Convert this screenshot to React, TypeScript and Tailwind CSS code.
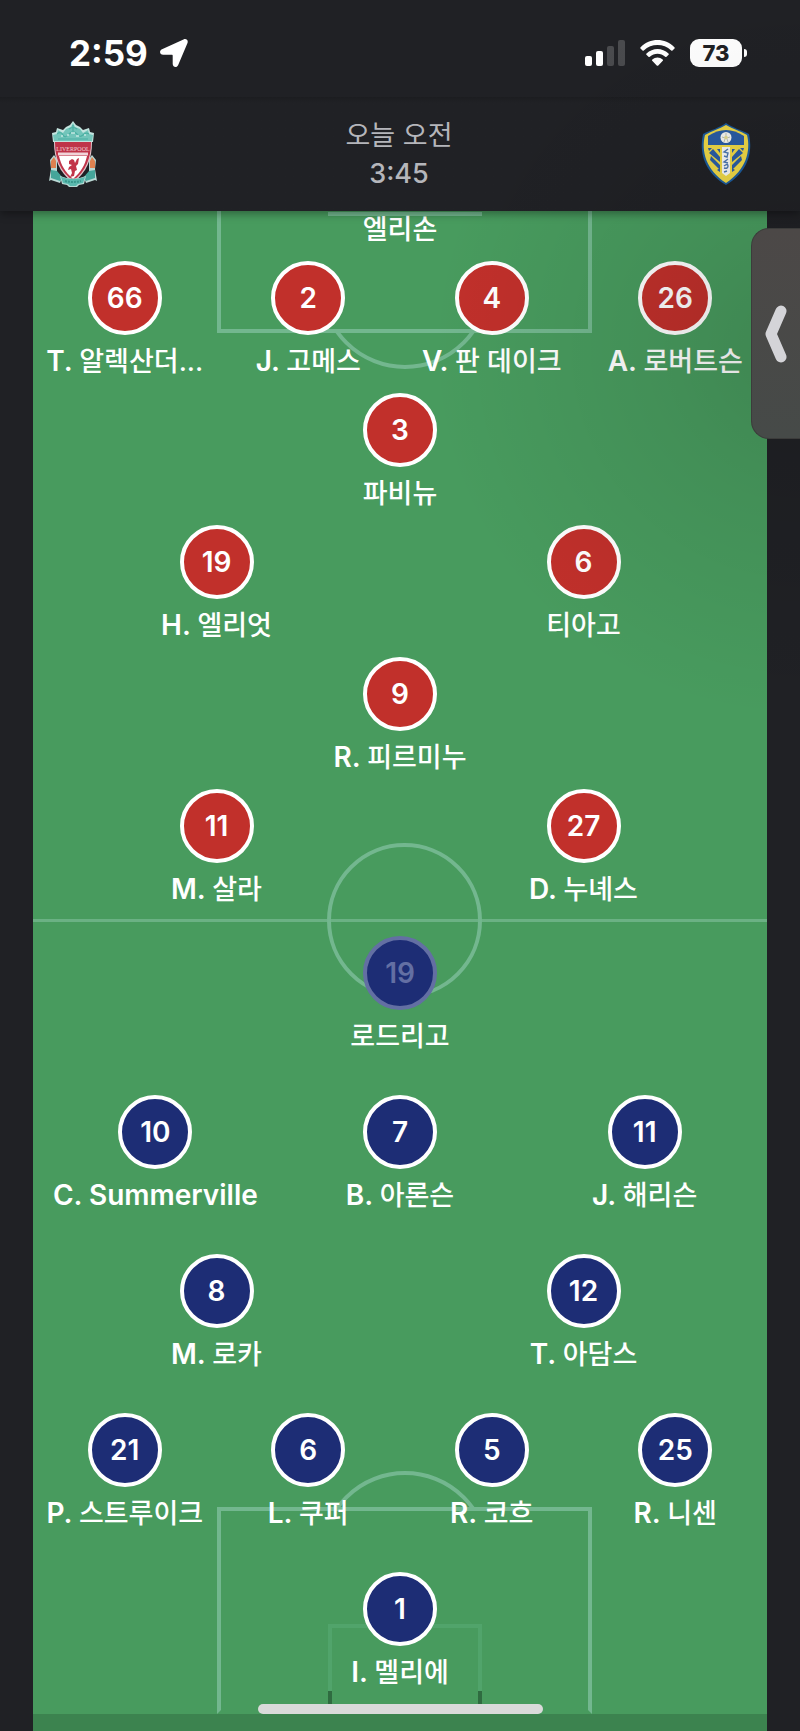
type Player = { number?: number; initial?: string; name: string; latin?: boolean; dim?: boolean };

const home: Player[][] = [
  [
    { number: 66, initial: 'T.', name: '알렉산더...' },
    { number: 2, initial: 'J.', name: '고메스' },
    { number: 4, initial: 'V.', name: '판 데이크' },
    { number: 26, initial: 'A.', name: '로버트슨' },
  ],
  [{ number: 3, name: '파비뉴' }],
  [
    { number: 19, initial: 'H.', name: '엘리엇' },
    { number: 6, name: '티아고' },
  ],
  [{ number: 9, initial: 'R.', name: '피르미누' }],
  [
    { number: 11, initial: 'M.', name: '살라' },
    { number: 27, initial: 'D.', name: '누녜스' },
  ],
];

const away: Player[][] = [
  [{ number: 19, name: '로드리고', dim: true }],
  [
    { number: 10, initial: 'C.', name: 'Summerville', latin: true },
    { number: 7, initial: 'B.', name: '아론슨' },
    { number: 11, initial: 'J.', name: '해리슨' },
  ],
  [
    { number: 8, initial: 'M.', name: '로카' },
    { number: 12, initial: 'T.', name: '아담스' },
  ],
  [
    { number: 21, initial: 'P.', name: '스트루이크' },
    { number: 6, initial: 'L.', name: '쿠퍼' },
    { number: 5, initial: 'R.', name: '코흐' },
    { number: 25, initial: 'R.', name: '니센' },
  ],
  [{ number: 1, initial: 'I.', name: '멜리에' }],
];

function PlayerName({ player }: { player: Player }) {
  return (
    <span className="block h-[38px] text-center text-[28px] leading-9 font-semibold whitespace-nowrap text-white">
      {player.initial ? player.initial + ' ' : ''}
      <span className={player.latin ? 'text-[28px]' : 'text-[27px] font-medium'}>{player.name}</span>
    </span>
  );
}

function Row({ players, team }: { players: Player[]; team: 'home' | 'away' }) {
  return (
    <ul className="flex">
      {players.map((p) => (
        <li key={p.name} className="flex min-w-0 flex-1 basis-0 flex-col items-center gap-2">
          <span
            className={
              'flex size-[74px] items-center justify-center rounded-full border-4 text-[28px] font-semibold ' +
              (team === 'home' ? 'bg-[#c1302b] ' : 'bg-[#1d2d75] ') +
              (p.dim ? 'border-[#636fa3] text-[#636fa3]' : 'border-white text-white')
            }
          >
            {p.number}
          </span>
          <PlayerName player={p} />
        </li>
      ))}
    </ul>
  );
}

function LiverpoolCrest() {
  return (
    <svg viewBox="0 0 48 66" className="h-[66px] w-12" role="img" aria-label="Liverpool">
      <path d="M24 0l3 4 4 2 3 3 6-2 1 4 4 1-1 9H4L3 12l4-1 1-4 6 2 3-3 4-2z" fill="#c3e4df" />
      <path d="M24 2l2 4 5 2 3 4 5-3 1 4 4 1-1 6H5l-1-6 4-1 1-4 5 3 3-4 5-2z" fill="#72c5ba" />
      <path d="M8 13q4-3 6 1t6-1q4-4 8 0 3 4 6 1t6-1M9 18h30M20 8q4-3 8 0M24 4v6" stroke="#4bb0a3" strokeWidth="1.2" fill="none" />
      <path d="M12 15h2m4-1h2m7 1h3m5-1h2M22 12h4" stroke="#c4e8e2" strokeWidth="1.5" />
      <path d="M1 39l4-5 3 4v14l5 5-2 5-9-3-2 1 2-12zM47 39l-4-5-3 4v14l-5 5 2 5 9-3 2 1-2-12z" fill="#b9d8d4" />
      <path d="M2 40l3-4 2 4v7H2zM46 40l-3-4-2 4v7h5z" fill="#de8150" />
      <path d="M2 49l6 1 6 7-3 3-9-3zM46 49l-6 1-6 7 3 3 9-3z" fill="#45a59a" />
      <path d="M5 21h38c0 17-5 30-19 41C10 51 5 38 5 21z" fill="#e3c5cb" />
      <path d="M6 21h36c0 16-5 29-18 39C11 50 6 37 6 21z" fill="#bf3449" />
      <path d="M10 35h28c-2 9-6 16-14 23-8-7-12-14-14-23z" fill="#fff" />
      <path d="M9 33h30" stroke="#f0d3d8" strokeWidth="3" />
      <text x="24" y="30" textAnchor="middle" fontFamily="Liberation Serif, serif" fontSize="6" fill="#f0cfd4">LIVERPOOL</text>
      <path d="M20 40l3-2 2 1 1 3 2-4 2-1-1 6-2 2 1 4-2 1-1 5-4 1 2-4-1-4-3 1 1-3 3-2-3-1z" fill="#c23449" />
      <path d="M11 55q13 5 26 0l-2 8-5 1-2 2h-8l-2-2-5-1z" fill="#b9d8d4" />
      <path d="M12 56q12 4 24 0l-2 6-5 1-2 2h-6l-2-2-5-1z" fill="#5bb9ae" />
      <path d="M16 60q8 2 16 0" stroke="#3a988d" strokeWidth="2" strokeDasharray="2 1" fill="none" />
    </svg>
  );
}

function LeedsCrest() {
  return (
    <svg viewBox="0 0 50 62" className="h-[62px] w-[50px]" role="img" aria-label="Leeds United">
      <path d="M25 0C32 5 40 7 48 11c4 18-1 38-23 51C3 49-2 29 2 11 10 7 18 5 25 0z" fill="#1c5b9b" />
      <path d="M25 2c7 4 14 6 21 10 4 16-1 35-21 48C5 47 0 28 4 12 11 8 18 6 25 2z" fill="#ecd646" />
      <path d="M7 22v-9Q25 1 43 13v9z" fill="#2a5ca3" />
      <path d="M7 25h4l-3 3zM8 30l4-4 7 8v5zM9 37l1-4 9 9v5zM16 26h3v4zM43 25h-4l3 3zM42 30l-4-4-7 8v5zM41 37l-1-4-9 9v5zM34 26h-3v4zM16 47l3-2v4zM34 47l-3-2v4z" fill="#2a5ca3" />
      <path d="M21 24h8v26l-4 3-4-3z" fill="#f3f5f4" />
      <path d="M27 26l-4 3 4 1-1 4-3-1m4 3l-4 3 4 1m-4 3q4-3 4 0t-4 2m3 3l-3 1" stroke="#4c76b0" strokeWidth="1.4" fill="none" />
      <circle cx="25" cy="14.5" r="5.5" fill="#f4f4ed" />
      <path d="M25 10v3m-4 1l3 1m5-1l-3 1m-3 4l1-3m3 3l-1-3" stroke="#b9beb6" strokeWidth="1" />
      <circle cx="25" cy="14.5" r="1.8" fill="#dfd893" />
    </svg>
  );
}

function StatusBar() {
  return (
    <div className="flex h-[97px] items-center justify-between pt-[9px] pr-[53px] pl-[69px] text-white">
      <div className="flex items-center gap-3">
        <time className="text-[35px] leading-10 font-bold">2:59</time>
        <svg viewBox="0 0 28 28" className="size-7" fill="#fff" aria-hidden="true">
          <path d="M23.500.4c2.700-1.200 5 .9 4 3.500l-9.300 22c-1.100 2.900-5.300 2.700-5.500-.9V16.800c0-.7-.3-1-1-1H3.200C-.5 15.600-1 11.500 2 10.200z" />
        </svg>
      </div>
      <div className="flex items-center gap-[15px]">
        <svg viewBox="0 0 40 26" className="h-[26px] w-10" fill="#fff" aria-label="signal">
          <rect x="0" y="16" width="7" height="10" rx="2" />
          <rect x="11" y="11" width="7" height="15" rx="2" />
          <rect x="22" y="6" width="7" height="20" rx="2" fill="#4a4b4e" />
          <rect x="33" y="0" width="7" height="26" rx="2" fill="#4a4b4e" />
        </svg>
        <svg viewBox="0 0 35 26" className="h-[26px] w-[35px]" fill="#fff" aria-label="wifi">
          <path d="M.6 7.200C10-2.300 25-2.300 34.400 7.200c.5.500.5.900.1 1.300l-2 2c-.4.400-.9.400-1.300 0-7.600-7.300-19.800-7.300-27.400 0-.4.400-.9.400-1.300 0l-2-2C.1 8.100.1 7.700.6 7.200z" />
          <path d="M6.500 13.400c6.200-6 15.800-6 22 0 .5.500.5.900.1 1.300l-2.100 2c-.4.400-.8.400-1.300 0-4.400-4-11-4-15.400 0-.5.400-.9.400-1.300 0l-2.100-2c-.4-.4-.4-.8.100-1.300z" />
          <path d="M12.300 19.400c3-2.700 7.400-2.700 10.400 0 .5.500.5.900.1 1.300l-4.500 4.700c-.5.500-1.100.5-1.600 0l-4.500-4.700c-.4-.4-.4-.8.100-1.300z" />
        </svg>
        <div className="flex items-center gap-0.5">
          <span className="flex h-7 w-[52px] items-center justify-center rounded-[9px] bg-white text-[22px] font-extrabold text-[#202124]">73</span>
          <span className="h-2 w-[3px] rounded-r-full bg-white" />
        </div>
      </div>
    </div>
  );
}

const mark = 'border-[#73b78f]';

export default function App() {
  return (
    <div
      lang="ko"
      className="relative flex min-h-screen flex-col overflow-hidden bg-[#202125] font-['Inter','Noto_Sans_CJK_KR',sans-serif]"
    >
      <header className="relative z-10 bg-[#202125] shadow-[0_3px_8px_rgba(0,0,0,0.35)]">
        <StatusBar />
        <div className="flex h-[114px] items-center justify-between bg-linear-to-b from-[#1c1d20] to-[#202125] to-5% px-[49px]">
          <LiverpoolCrest />
          <div className="flex flex-col items-center text-[#b5b6bb]">
            <span className="text-[27px] leading-10 font-normal">오늘 오전</span>
            <time className="text-[27px] leading-9 font-medium">3:45</time>
          </div>
          <LeedsCrest />
        </div>
      </header>

      <main className="mx-[33px] flex flex-1 flex-col overflow-hidden bg-[#489b5e]">
        <section className="relative pb-2.5">
          <div className="pointer-events-none absolute inset-0 pl-[9px]" aria-hidden="true">
            <div className={'mx-auto h-[122px] w-[375px] border-4 border-t-0 ' + mark} />
            <div className="mx-auto h-9 w-[170px] overflow-hidden">
              <div className={'-mt-[134px] size-[170px] rounded-full border-4 ' + mark} />
            </div>
          </div>
          <div className="pointer-events-none absolute inset-x-0 top-0 pl-[9px]" aria-hidden="true">
            <div className={'mx-auto h-[5px] w-[154px] border-b-4 ' + mark} />
          </div>
          <div className="relative flex flex-col gap-3">
            <PlayerName player={{ name: '엘리손' }} />
            {home.map((row, i) => (
              <Row key={i} players={row} team="home" />
            ))}
          </div>
        </section>

        <div className="relative h-[3px] bg-[#6bb184]" aria-hidden="true">
          <div className="absolute inset-x-0 -top-[76px] pl-[9px]">
            <div className={'mx-auto size-[155px] rounded-full border-4 ' + mark} />
          </div>
        </div>

        <section className="relative pt-3.5 pb-[22px]">
          <div className="pointer-events-none absolute inset-0 flex flex-col justify-end pl-[9px]" aria-hidden="true">
            <div className="mx-auto h-9 w-[170px] overflow-hidden">
              <div className={'size-[170px] rounded-full border-4 ' + mark} />
            </div>
            <div className="mx-auto flex h-[207px] w-[375px] flex-col items-center justify-end border-4 border-[#73b78f] border-b-transparent">
              <div className="h-[67px] w-[154px] border-4 border-b-0 border-[#51a46b]" />
              <div className="h-[19px] w-[154px] border-x-4 border-[#2f6b40]" />
            </div>
          </div>
          <div className="relative flex flex-col gap-[39px]">
            {away.map((row, i) => (
              <Row key={i} players={row} team="away" />
            ))}
          </div>
        </section>
        <div className="min-h-[17px] flex-1 bg-[#3c834f]" />
      </main>

      <div className="pointer-events-none absolute inset-0 z-20 bg-[radial-gradient(circle_at_100%_350px,rgba(0,0,0,0.14),rgba(0,0,0,0.08)_140px,transparent_370px)]" />

      <button
        type="button"
        aria-label="열기"
        className="absolute top-[228px] right-0 z-30 flex h-[211px] w-[49px] items-center rounded-l-[18px] border border-r-0 border-[#3c3c3b] bg-linear-to-b from-[#4c4847] to-[#464a48] pl-[13px]"
      >
        <svg viewBox="0 0 22 58" className="h-[58px] w-[22px]" aria-hidden="true">
          <path d="M16 6L6 29l10 23" fill="none" stroke="#d4d4d8" strokeWidth="11" strokeLinecap="round" strokeLinejoin="round" />
        </svg>
      </button>

      <div className="absolute inset-x-0 bottom-[17px] z-30 flex justify-center">
        <div className="h-2.5 w-[285px] rounded-full bg-[#dadada]" />
      </div>
    </div>
  );
}
